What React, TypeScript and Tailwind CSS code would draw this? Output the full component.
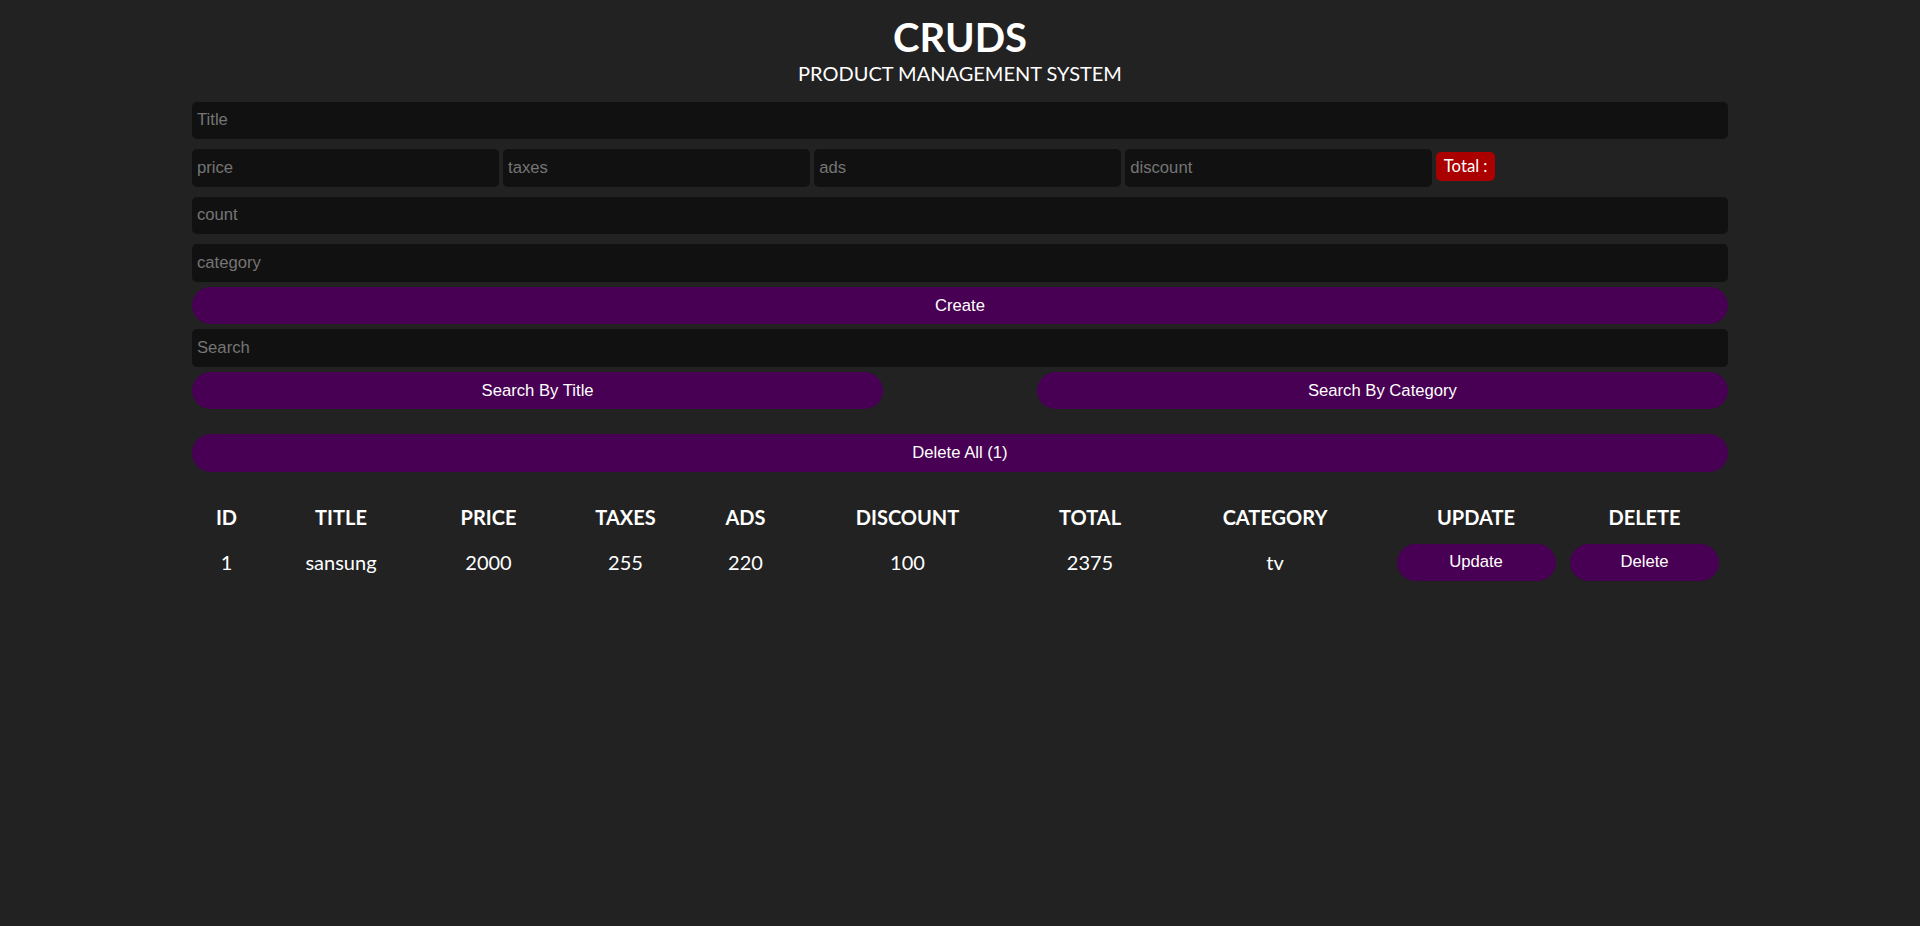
import { useState } from "react";

const field =
  "block w-full h-[37.5px] rounded-[5px] bg-[#111] px-[5px] text-[16.67px] text-white outline-none placeholder:text-[#757575] font-['Liberation_Sans',Arial,sans-serif]";

const pill =
  "block h-[37.5px] rounded-[25px] bg-[#470053] text-[16.67px] text-white font-['Liberation_Sans',Arial,sans-serif] cursor-pointer";

const cols = ["ID", "TITLE", "PRICE", "TAXES", "ADS", "DISCOUNT", "TOTAL", "CATEGORY", "UPDATE", "DELETE"];

const products = [
  { id: 1, title: "sansung", price: 2000, taxes: 255, ads: 220, discount: 100, total: 2375, category: "tv" },
];

export default function App() {
  const [search, setSearch] = useState("");

  return (
    <div className="min-h-screen bg-[#222] text-white font-['Lato','Noto_Sans',sans-serif]">
      <div className="w-[80%] mx-auto pt-[13px]">
        {/* Header */}
        <div className="text-center">
          <h1 className="text-[40px] leading-[48px] font-bold">CRUDS</h1>
          <p className="text-[20px] leading-[24px] uppercase">Product management system</p>
        </div>

        {/* Inputs */}
        <input className={`${field} mt-[16.5px]`} placeholder="Title" />
        <div className="flex items-center gap-[3.9px] mt-[10px]">
          <input className={`${field} !w-[20%]`} placeholder="price" />
          <input className={`${field} !w-[20%]`} placeholder="taxes" />
          <input className={`${field} !w-[20%]`} placeholder="ads" />
          <input className={`${field} !w-[20%]`} placeholder="discount" />
          <small className="bg-[#a00] rounded-[5px] px-[7.5px] py-[4.5px] text-[16.67px] leading-[20px] mb-[3px]">
            Total :
          </small>
        </div>
        <input className={`${field} mt-[10px]`} placeholder="count" />
        <input className={`${field} mt-[10px]`} placeholder="category" />
        <button className={`${pill} w-full mt-[5px]`}>Create</button>

        {/* Search */}
        <input
          className={`${field} mt-[5px]`}
          placeholder="Search"
          value={search}
          onChange={(e) => setSearch(e.target.value)}
        />
        <div className="flex justify-between mt-[5px]">
          <button className={`${pill} w-[45%]`}>Search By Title</button>
          <button className={`${pill} w-[45%]`}>Search By Category</button>
        </div>

        <button className={`${pill} w-full mt-[25px]`}>Delete All (1)</button>

        {/* Table */}
        <div className="mt-[20.5px] px-[2.5px] grid grid-cols-[64px_160px_130px_139px_96px_223px_137px_228px_169px_163px] gap-x-[2.5px] text-center text-[20px] leading-[24px]">
          {cols.map((c) => (
            <div key={c} className="font-bold py-[12.5px]">
              {c}
            </div>
          ))}
          {products.map((p) => (
            <div key={p.id} className="contents">
              <div className="mt-[2.5px] flex items-center justify-center">{p.id}</div>
              <div className="mt-[2.5px] flex items-center justify-center">{p.title}</div>
              <div className="mt-[2.5px] flex items-center justify-center">{p.price}</div>
              <div className="mt-[2.5px] flex items-center justify-center">{p.taxes}</div>
              <div className="mt-[2.5px] flex items-center justify-center">{p.ads}</div>
              <div className="mt-[2.5px] flex items-center justify-center">{p.discount}</div>
              <div className="mt-[2.5px] flex items-center justify-center">{p.total}</div>
              <div className="mt-[2.5px] flex items-center justify-center">{p.category}</div>
              <div className="mt-[2.5px] px-[5px]">
                <button className={`${pill} w-full`}>Update</button>
              </div>
              <div className="mt-[2.5px] px-[7px]">
                <button className={`${pill} w-full`}>Delete</button>
              </div>
            </div>
          ))}
        </div>
      </div>
    </div>
  );
}
